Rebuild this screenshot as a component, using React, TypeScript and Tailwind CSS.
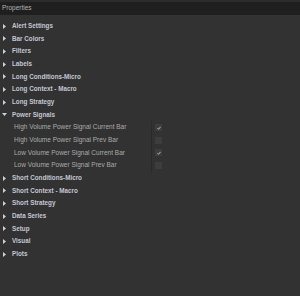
const sections = [
  "Alert Settings",
  "Bar Colors",
  "Filters",
  "Labels",
  "Long Conditions-Micro",
  "Long Context - Macro",
  "Long Strategy",
];

const after = [
  "Short Conditions-Micro",
  "Short Context - Macro",
  "Short Strategy",
  "Data Series",
  "Setup",
  "Visual",
  "Plots",
];

const signals = [
  { label: "High Volume Power Signal Current Bar", checked: true },
  { label: "High Volume Power Signal Prev Bar", checked: false },
  { label: "Low Volume Power Signal Current Bar", checked: true },
  { label: "Low Volume Power Signal Prev Bar", checked: false },
];

function Caret({ open }: { open?: boolean }) {
  return (
    <svg width="5" height="5" viewBox="0 0 5 5" className="shrink-0">
      {open ? <polygon points="0,1 5,1 2.5,4" fill="#d0d0d0" /> : <polygon points="1,0 4,2.5 1,5" fill="#d0d0d0" />}
    </svg>
  );
}

function Section({ name, open }: { name: string; open?: boolean }) {
  return (
    <div className="flex h-[12.66px] items-center gap-[5px] pl-[2px]">
      <Caret open={open} />
      <span className="text-[6.3px] font-bold leading-none text-[#c4c7d2]">{name}</span>
    </div>
  );
}

function Check({ checked }: { checked: boolean }) {
  return (
    <div className="flex h-[7px] w-[7px] items-center justify-center bg-[#3d3d3d]">
      {checked && (
        <svg width="4" height="4" viewBox="0 0 5 5">
          <path d="M0.5 3 L2 4 L4.5 1" stroke="#d8d8d8" strokeWidth="1" fill="none" />
        </svg>
      )}
    </div>
  );
}

export default function App() {
  return (
    <div className="h-[296px] w-[300px] overflow-hidden bg-[#323232]" style={{ fontFamily: '"Liberation Sans", Arial, sans-serif' }}>
      <div className="h-[2px] bg-[#2b2b2b]" />
      <div className="flex h-[13px] items-center bg-[#1f1f1f] pl-[2px]">
        <span className="text-[6.5px] leading-none text-[#b4b4b4]">Properties</span>
      </div>
      <div className="pt-[5px]">
        {sections.map((s) => (
          <Section key={s} name={s} />
        ))}
        <Section name="Power Signals" open />
        <div className="flex">
          <div className="w-[152px] border-r border-[#2a2a2a]">
            {signals.map((s) => (
              <div key={s.label} className="flex h-[12.66px] items-center pl-[14px]">
                <span className="text-[6.5px] leading-none text-[#ababab]">{s.label}</span>
              </div>
            ))}
          </div>
          <div className="pl-[3px]">
            {signals.map((s) => (
              <div key={s.label} className="flex h-[12.66px] items-center">
                <Check checked={s.checked} />
              </div>
            ))}
          </div>
        </div>
        {after.map((s) => (
          <Section key={s} name={s} />
        ))}
      </div>
    </div>
  );
}
